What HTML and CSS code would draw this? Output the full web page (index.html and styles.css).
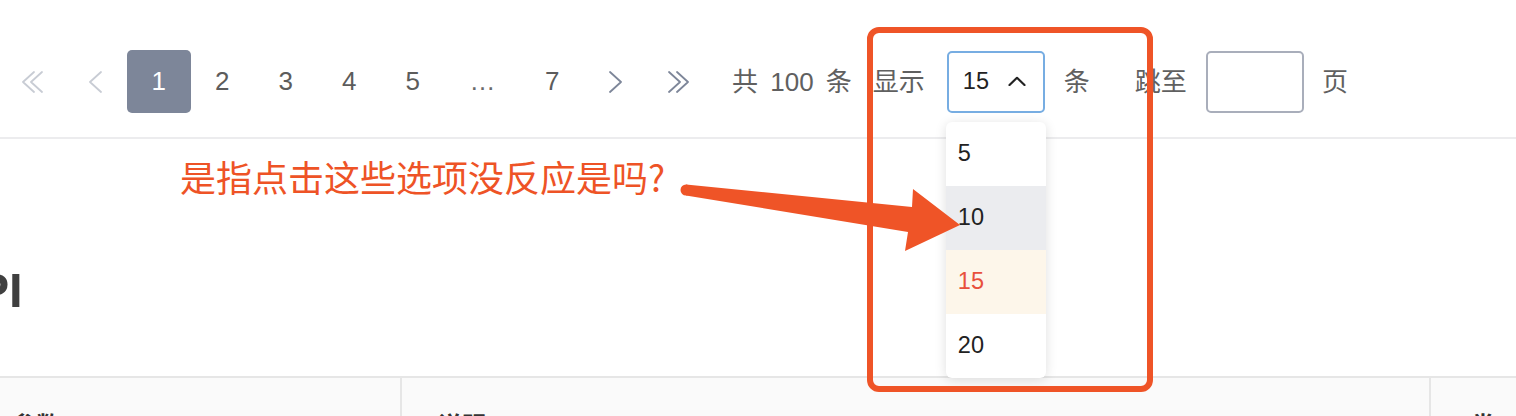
FILE: index.html
```html
<!DOCTYPE html>
<html lang="zh-CN">
<head>
<meta charset="utf-8">
<title>Pagination</title>
<link rel="stylesheet" href="styles.css">
</head>
<body>
<div class="pager-bar">
  <div class="pager">
    <span class="pg-item pg-disabled">
      <svg class="ico" width="22" height="22" viewBox="0 0 22 22"><path d="M13 1 L2 11 L13 21 M21 1 L10 11 L21 21"/></svg>
    </span>
    <span class="pg-item pg-disabled">
      <svg class="ico" width="16" height="22" viewBox="0 0 16 22"><path d="M14 1 L3 11 L14 21"/></svg>
    </span>
    <span class="pg-item pg-active">1</span>
    <span class="pg-item">2</span>
    <span class="pg-item">3</span>
    <span class="pg-item">4</span>
    <span class="pg-item">5</span>
    <span class="pg-item pg-ellipsis">…</span>
    <span class="pg-item">7</span>
    <span class="pg-item pg-nav">
      <svg class="ico" width="16" height="22" viewBox="0 0 16 22"><path d="M2 1 L13 11 L2 21"/></svg>
    </span>
    <span class="pg-item pg-nav">
      <svg class="ico" width="22" height="22" viewBox="0 0 22 22"><path d="M1 1 L12 11 L1 21 M9 1 L20 11 L9 21"/></svg>
    </span>
    <span class="pg-text pg-total">共 100 条</span>
    <span class="pg-text pg-show">显示</span>
    <div class="pg-select">
      <span class="sel-value">15</span>
      <svg class="caret" width="18" height="10" viewBox="0 0 18 10"><path d="M1.5 9 L9 1.8 L16.5 9"/></svg>
      <ul class="dropdown">
        <li class="opt">5</li>
        <li class="opt opt-hover">10</li>
        <li class="opt opt-selected">15</li>
        <li class="opt">20</li>
      </ul>
    </div>
    <span class="pg-text pg-unit">条</span>
    <span class="pg-text pg-jump">跳至</span>
    <span class="pg-input"></span>
    <span class="pg-text pg-page">页</span>
  </div>
</div>

<main class="content">
  <h1 class="title">API</h1>
  <div class="table-head">
    <div class="th th-1">参数</div>
    <div class="th th-2">说明</div>
    <div class="th th-3">类型</div>
  </div>
</main>

<div class="annotation">
  <p class="note">是指点击这些选项没反应是吗?</p>
  <svg class="marks" width="1516" height="416" viewBox="0 0 1516 416">
    <rect x="870" y="30" width="280" height="359" rx="9" ry="9" fill="none" stroke="#ef5427" stroke-width="6"/>
    <circle cx="686" cy="190" r="5.5" fill="#ef5427"/>
    <polygon points="686,184.5 912,207 913,189 960,225 905,251 908,232 686,195.5" fill="#ef5427"/>
  </svg>
</div>
</body>
</html>
```
FILE: styles.css
```css
* {
  box-sizing: border-box;
}

html, body {
  margin: 0;
  padding: 0;
  background: #ffffff;
  overflow: hidden;
}

body {
  width: 1516px;
  height: 416px;
  position: relative;
  font-family: "Liberation Sans", "Noto Sans CJK SC", sans-serif;
  color: #606060;
}

.pager-bar {
  height: 139px;
  border-bottom: 2px solid #ececee;
}

.pager {
  display: flex;
  align-items: center;
  padding-top: 50px;
  height: 113px;
}

.pg-item {
  width: 63.5px;
  height: 63px;
  display: flex;
  align-items: center;
  justify-content: center;
  font-size: 26px;
  color: #5c5c5c;
  border-radius: 5px;
  flex: none;
}

.pg-active {
  background: #7d8699;
  color: #ffffff;
}

.pg-ellipsis {
  width: 76px;
  color: #6a6a6a;
}

.ico {
  fill: none;
  stroke-width: 1.8;
  stroke-linecap: round;
  stroke-linejoin: round;
}

.pg-disabled .ico {
  stroke: #c8ccd4;
}

.pg-nav .ico {
  stroke: #7d8699;
}

.pg-text {
  font-size: 26px;
  color: #606060;
  flex: none;
  line-height: 1;
}

.pg-total {
  margin-left: 21px;
  word-spacing: 5px;
}

.pg-show {
  margin-left: 21px;
}

.pg-select {
  position: relative;
  margin-left: 22px;
  width: 98px;
  height: 62px;
  border: 2px solid #77ade2;
  border-radius: 5px;
  display: flex;
  align-items: center;
  padding-left: 14px;
  gap: 19px;
  flex: none;
}

.sel-value {
  font-size: 23.5px;
  color: #222222;
}

.caret {
  fill: none;
  stroke: #222222;
  stroke-width: 2.2;
  stroke-linecap: round;
  stroke-linejoin: round;
  margin-top: -2px;
}

.dropdown {
  position: absolute;
  left: -3px;
  top: 69px;
  width: 100px;
  margin: 0;
  padding: 0;
  list-style: none;
  background: #ffffff;
  border-radius: 6px;
  box-shadow: 0 2px 12px rgba(0, 0, 0, 0.13);
  overflow: hidden;
  z-index: 5;
}

.opt {
  height: 64px;
  display: flex;
  align-items: center;
  padding-left: 12px;
  font-size: 23.5px;
  color: #222222;
}

.opt-hover {
  background: #ebecef;
}

.opt-selected {
  background: #fdf6ea;
  color: #e8503c;
}

.pg-unit {
  margin-left: 19px;
}

.pg-jump {
  margin-left: 45px;
}

.pg-input {
  margin-left: 19px;
  width: 98px;
  height: 62px;
  border: 2px solid #a9aebb;
  border-radius: 5px;
  flex: none;
}

.pg-page {
  margin-left: 18px;
}

.content {
  padding-top: 1px;
}

.title {
  margin: 126px 0 0 -59px;
  font-size: 49px;
  line-height: 49px;
  height: 49px;
  font-weight: 700;
  color: #404040;
}

.table-head {
  margin-top: 61px;
  height: 42px;
  border-top: 2px solid #e6e6e6;
  background: #fafafa;
  display: grid;
  grid-template-columns: 400px 1029px 1fr;
}

.th {
  padding-top: 36px;
  font-size: 24px;
  font-weight: 700;
  color: #333333;
  line-height: 1;
}

.th-1 {
  padding-left: 12px;
}

.th-2 {
  border-left: 2px solid #e6e6e6;
  padding-left: 36px;
}

.th-3 {
  border-left: 2px solid #e6e6e6;
  padding-left: 40px;
}

.annotation {
  position: absolute;
  left: 0;
  top: 0;
  width: 1516px;
  height: 416px;
  pointer-events: none;
  z-index: 10;
}

.note {
  position: absolute;
  left: 180px;
  top: 158px;
  margin: 0;
  font-family: "Noto Sans CJK SC", sans-serif;
  font-size: 36px;
  line-height: 36px;
  color: #ee5326;
  white-space: nowrap;
}

.marks {
  position: absolute;
  left: 0;
  top: 0;
}
```
